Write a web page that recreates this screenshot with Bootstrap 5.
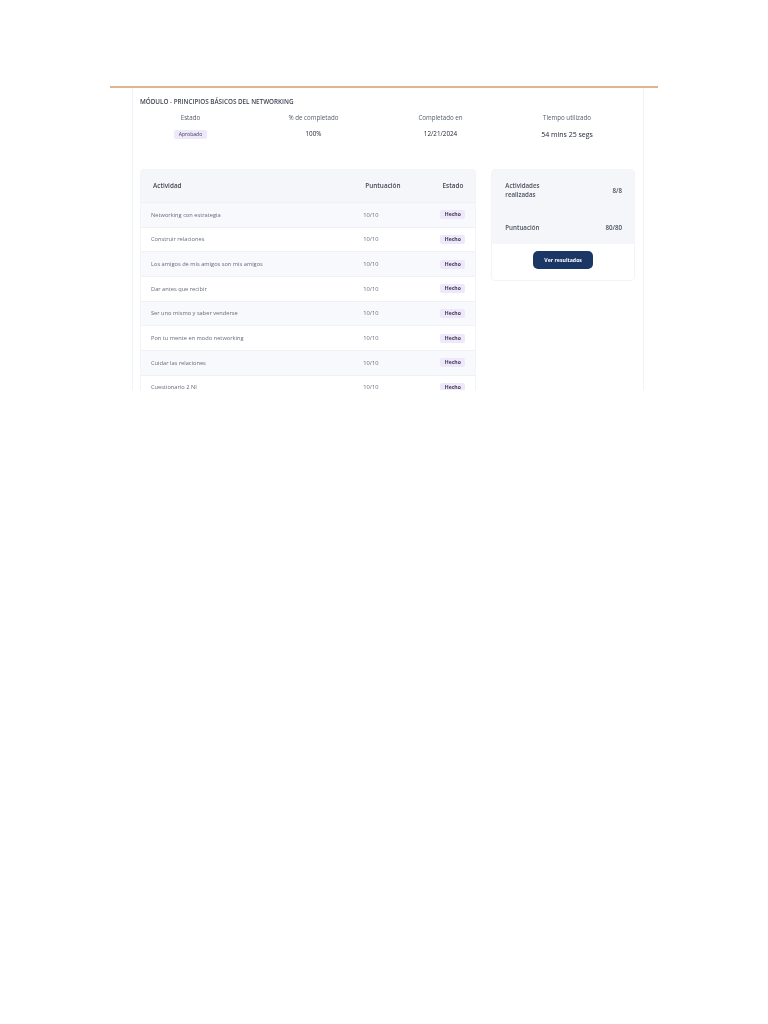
<!doctype html>
<html lang="es"><head><meta charset="utf-8"><title>Resultados</title>
<link href="https://cdn.jsdelivr.net/npm/bootstrap@5.3.0/dist/css/bootstrap.min.css" rel="stylesheet">
<style>
body{background:#fff;font-family:"Open Sans","Liberation Sans",sans-serif;color:#4a5160}
.shot{width:548px;height:304px;margin:86px 0 0 110px;overflow:hidden;border-top:2px solid #e0b48f;filter:blur(.3px)}
.sheet{width:512px;height:302px;margin-left:22px;padding:9px 8px 0 7px;border:1px solid #f2f3f6;border-bottom:0;border-top:0;overflow:hidden}
.mod-title{font-size:6.3px;font-weight:600;line-height:10px;color:#3f4553;margin-bottom:6px}
.stats{display:grid;grid-template-columns:repeat(4,125px);height:40px;margin:0 0 16px -12px;width:500px}
.stat{text-align:center;font-size:6.2px;color:#535c6d;line-height:10px}
.stat b{display:block;font-weight:400;font-size:6.3px;color:#22283a;margin-top:4px;line-height:14px}
.stat .big{font-size:7px;margin-top:5px}
.stat-b{padding-right:4px}.stat-d{padding-left:3px}
.pill{display:inline-block;background:#efe8fa;color:#3f3a55;border-radius:2px;font-size:5.1px;font-weight:700;line-height:9px;padding:0 4.5px}
.stat .pill{padding:0 5px;line-height:9.5px;font-size:5.1px;font-weight:400;vertical-align:middle}
.main{gap:15px}
.tbl{width:337px;border:1px solid #f3f4f7;border-bottom:0;border-radius:4px 4px 0 0;overflow:hidden}
.head{height:32px;background:#f5f6f9;font-size:6.4px;font-weight:600;color:#414856}
.line{height:24.7px;font-size:5.7px;color:#646b7b;border-top:1px solid #f0f1f5}
.line:nth-child(even){background:#f8f9fd}
.c1{flex:1;padding-left:10px}.head .c1{padding-left:12px}
.c2{width:55px}.head .c2{width:65px}
.c3{width:57px;text-align:right;padding-right:10px}.head .c3{width:45px;padding-right:12px}
.side{width:144px;height:112px;border:1px solid #f3f4f7;border-radius:4px;overflow:hidden}
.side-top{background:#f5f6f9;height:74px;padding:11px 12px 0 13px;font-size:6.2px;font-weight:600;color:#4a5160}
.side-row{line-height:9px}
.go{display:block;width:60px;height:18px;margin:7px auto 0;padding:0;border:0;border-radius:5px;background:#1b3766;color:#fff;font-size:5.2px;font-weight:700;line-height:18px}
</style></head><body>
<div class="shot"><div class="sheet">
<div class="mod-title">MÓDULO - PRINCIPIOS BÁSICOS DEL NETWORKING</div>
<div class="stats">
<div class="stat">Estado<b><span class="pill">Aprobado</span></b></div>
<div class="stat stat-b">% de completado<b>100%</b></div>
<div class="stat">Completado en<b>12/21/2024</b></div>
<div class="stat stat-d">Tiempo utilizado<b class="big">54 mins 25 segs</b></div>
</div>
<div class="d-flex main align-items-start">
<div class="tbl">
<div class="head d-flex align-items-center"><div class="c1">Actividad</div><div class="c2">Puntuación</div><div class="c3">Estado</div></div>
<div class="line d-flex align-items-center"><div class="c1">Networking con estrategia</div><div class="c2">10/10</div><div class="c3"><span class="pill">Hecho</span></div></div>
<div class="line d-flex align-items-center"><div class="c1">Construir relaciones</div><div class="c2">10/10</div><div class="c3"><span class="pill">Hecho</span></div></div>
<div class="line d-flex align-items-center"><div class="c1">Los amigos de mis amigos son mis amigos</div><div class="c2">10/10</div><div class="c3"><span class="pill">Hecho</span></div></div>
<div class="line d-flex align-items-center"><div class="c1">Dar antes que recibir</div><div class="c2">10/10</div><div class="c3"><span class="pill">Hecho</span></div></div>
<div class="line d-flex align-items-center"><div class="c1">Ser uno mismo y saber venderse</div><div class="c2">10/10</div><div class="c3"><span class="pill">Hecho</span></div></div>
<div class="line d-flex align-items-center"><div class="c1">Pon tu mente en modo networking</div><div class="c2">10/10</div><div class="c3"><span class="pill">Hecho</span></div></div>
<div class="line d-flex align-items-center"><div class="c1">Cuidar las relaciones</div><div class="c2">10/10</div><div class="c3"><span class="pill">Hecho</span></div></div>
<div class="line d-flex align-items-center"><div class="c1">Cuestionario 2 NI</div><div class="c2">10/10</div><div class="c3"><span class="pill">Hecho</span></div></div>
</div>
<div class="side">
<div class="side-top">
<div class="d-flex justify-content-between align-items-center side-row"><span>Actividades<br>realizadas</span><span>8/8</span></div>
<div class="d-flex justify-content-between align-items-center side-row mt-4"><span>Puntuación</span><span>80/80</span></div>
</div>
<button class="go" type="button">Ver resultados</button>
</div>
</div>
</div></div>
</body></html>
